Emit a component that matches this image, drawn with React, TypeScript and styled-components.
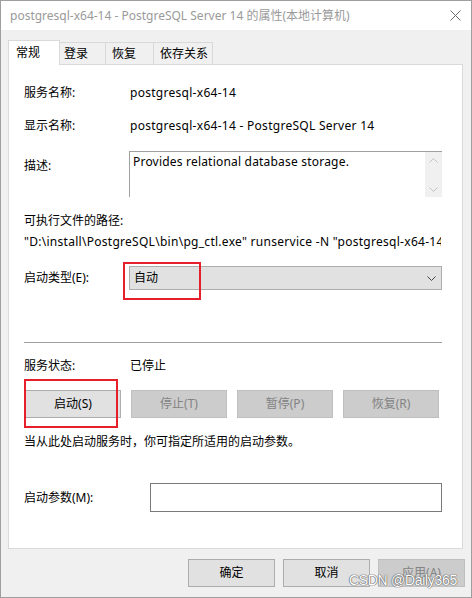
import React from 'react';
import styled, { createGlobalStyle } from 'styled-components';

const Global = createGlobalStyle`
  html, body { margin: 0; padding: 0; background: #fff; }
  body {
    font-family: "Noto Sans", "Noto Sans CJK SC", sans-serif;
    font-size: 12px;
    color: #000;
  }
  * { box-sizing: border-box; }
`;

const Window = styled.div`
  position: relative;
  width: 472px;
  height: 598px;
  border: 1px solid #9e9e9e;
  background: #f0f0f0;
  display: flex;
  flex-direction: column;
  overflow: hidden;
`;

const TitleBar = styled.div`
  height: 29px;
  background: #fff;
  display: flex;
  align-items: center;
  justify-content: space-between;
  padding-left: 9px;
  flex: none;
`;

const Title = styled.div`
  color: #9a9a9a;
  white-space: nowrap;
  line-height: 16px;
`;

const CloseBtn = styled.div`
  width: 30px;
  height: 29px;
  display: flex;
  align-items: center;
  justify-content: center;
  padding-right: 2px;
`;

const Body = styled.div`
  padding-top: 10px;
  display: flex;
  flex-direction: column;
  flex: 1;
`;

const TabBar = styled.div`
  display: flex;
  align-items: flex-end;
  height: 24px;
  padding-left: 7px;
  position: relative;
  z-index: 1;
`;

const Tab = styled.div<{ $active?: boolean; $w: number; $pl: number }>`
  width: ${p => p.$w}px;
  height: ${p => (p.$active ? 25 : 22)}px;
  margin-bottom: ${p => (p.$active ? -1 : 0)}px;
  margin-left: ${p => (p.$active ? 0 : -1)}px;
  padding-left: ${p => p.$pl}px;
  border: 1px solid #d9d9d9;
  border-bottom: none;
  background: ${p => (p.$active ? '#fff' : '#f0f0f0')};
  display: flex;
  align-items: center;
  white-space: nowrap;
  line-height: 16px;
  padding-bottom: ${p => (p.$active ? 1 : 0)}px;
  position: relative;
  z-index: ${p => (p.$active ? 2 : 1)};
`;

const Panel = styled.div`
  margin: 0 8px 0 7px;
  height: 485px;
  background: #fff;
  border: 1px solid #d9d9d9;
  padding: 0 20px 0 15px;
  display: flex;
  flex-direction: column;
  flex: none;
`;

const Row = styled.div<{ $h: number; $mt: number; $top?: boolean }>`
  display: flex;
  align-items: ${p => (p.$top ? 'flex-start' : 'center')};
  height: ${p => p.$h}px;
  margin-top: ${p => p.$mt}px;
  flex: none;
  white-space: nowrap;
  line-height: 16px;
`;

const Label = styled.div<{ $w?: number; $pt?: number }>`
  width: ${p => p.$w ?? 106}px;
  flex: none;
  padding-top: ${p => p.$pt ?? 0}px;
`;

const Value = styled.div<{ $latin?: boolean }>`
  white-space: nowrap;
  letter-spacing: ${p => (p.$latin ? '0.28px' : 'normal')};
`;

const PathText = styled.div`
  overflow: hidden;
  white-space: nowrap;
  width: 417px;
  letter-spacing: 0.28px;
`;

const TextArea = styled.div`
  margin-left: -1px;
  flex: 1;
  height: 46px;
  border-top: 1px solid #a0a0a0;
  border-left: 1px solid #a0a0a0;
  display: flex;
  background: #fff;
`;

const TextContent = styled.div`
  flex: 1;
  padding: 2px 0 0 3px;
  letter-spacing: 0.2px;
`;

const ScrollBar = styled.div`
  width: 17px;
  background: #f0f0f0;
  display: flex;
  flex-direction: column;
  justify-content: space-between;
  align-items: center;
  padding: 6px 0 5px;
`;

const Combo = styled.div`
  position: relative;
  margin-left: -1px;
  flex: 1;
  height: 24px;
  background: #e1e1e1;
  border: 1px solid #adadad;
  display: flex;
  align-items: center;
  justify-content: space-between;
  padding: 0 5px 0 4px;
`;

const Highlight = styled.div<{ $l: number; $t: number; $w: number; $h: number }>`
  position: absolute;
  left: ${p => p.$l}px;
  top: ${p => p.$t}px;
  width: ${p => p.$w}px;
  height: ${p => p.$h}px;
  border: 2px solid #e5202a;
  pointer-events: none;
`;

const Separator = styled.div`
  height: 1px;
  background: #a0a0a0;
  margin-top: 52px;
  flex: none;
`;

const ButtonGrid = styled.div`
  display: grid;
  grid-template-columns: repeat(4, 96px);
  column-gap: 10px;
  height: 28px;
  margin-top: 14px;
  padding-left: 1px;
  flex: none;
`;

const Cell = styled.div`
  position: relative;
`;

const Button = styled.div<{ $disabled?: boolean; $w?: number }>`
  width: ${p => (p.$w ? `${p.$w}px` : '100%')};
  height: 28px;
  background: ${p => (p.$disabled ? '#cccccc' : '#e1e1e1')};
  border: 1px solid ${p => (p.$disabled ? '#bfbfbf' : '#adadad')};
  color: ${p => (p.$disabled ? '#838383' : '#000')};
  display: flex;
  align-items: center;
  justify-content: center;
  white-space: nowrap;
  line-height: 16px;
`;

const Input = styled.div`
  flex: 1;
  height: 29px;
  border: 1px solid #7a7a7a;
  background: #fff;
`;

const Footer = styled.div`
  display: flex;
  justify-content: flex-end;
  gap: 8px;
  padding-right: 6px;
  margin-top: 10px;
`;

const Watermark = styled.div`
  position: absolute;
  right: 14px;
  bottom: 9px;
  font-family: "Liberation Sans", Arial, sans-serif;
  font-size: 14px;
  letter-spacing: -0.3px;
  color: #ffffff;
  text-shadow: 0 0 1px #555, 0 0 1px #555, 0 0 1px #777;
  white-space: nowrap;
  pointer-events: none;
`;

const Chevron = ({ up, color }: { up?: boolean; color: string }) => (
  <svg width="9" height="5" viewBox="0 0 9 5">
    <polyline
      points={up ? '0.5,4.5 4.5,0.5 8.5,4.5' : '0.5,0.5 4.5,4.5 8.5,0.5'}
      fill="none"
      stroke={color}
      strokeWidth="1"
    />
  </svg>
);

export default function App() {
  return (
    <>
      <Global />
      <Window>
        <TitleBar>
          <Title>postgresql-x64-14 - PostgreSQL Server 14 的属性(本地计算机)</Title>
          <CloseBtn>
            <svg width="11" height="11" viewBox="0 0 11 11">
              <path d="M0.5 0.5 L10.5 10.5 M10.5 0.5 L0.5 10.5" stroke="#6a6a6a" strokeWidth="1" />
            </svg>
          </CloseBtn>
        </TitleBar>
        <Body>
          <TabBar>
            <Tab $active $w={52} $pl={7}>常规</Tab>
            <Tab $w={47} $pl={4}>登录</Tab>
            <Tab $w={49} $pl={6}>恢复</Tab>
            <Tab $w={60} $pl={6}>依存关系</Tab>
          </TabBar>
          <Panel>
            <Row $h={20} $mt={18}>
              <Label>服务名称:</Label>
              <Value $latin>postgresql-x64-14</Value>
            </Row>
            <Row $h={20} $mt={13}>
              <Label>显示名称:</Label>
              <Value $latin>postgresql-x64-14 - PostgreSQL Server 14</Value>
            </Row>
            <Row $h={46} $mt={15} $top>
              <Label $pt={7}>描述:</Label>
              <TextArea>
                <TextContent>Provides relational database storage.</TextContent>
                <ScrollBar>
                  <Chevron up color="#c2c2c2" />
                  <Chevron color="#c2c2c2" />
                </ScrollBar>
              </TextArea>
            </Row>
            <Row $h={20} $mt={14}>
              <Label $w={200}>可执行文件的路径:</Label>
            </Row>
            <Row $h={20} $mt={1}>
              <PathText>"D:\install\PostgreSQL\bin\pg_ctl.exe" runservice -N "postgresql-x64-14"</PathText>
            </Row>
            <Row $h={24} $mt={14}>
              <Label>启动类型(E):</Label>
              <Combo>
                <span>自动</span>
                <Chevron color="#444" />
                <Highlight $l={-7} $t={-5} $w={78} $h={38} />
              </Combo>
            </Row>
            <Separator />
            <Row $h={20} $mt={13}>
              <Label>服务状态:</Label>
              <Value>已停止</Value>
            </Row>
            <ButtonGrid>
              <Cell>
                <Button>启动(S)</Button>
                <Highlight $l={-1} $t={-11} $w={94} $h={49} />
              </Cell>
              <Cell>
                <Button $disabled>停止(T)</Button>
              </Cell>
              <Cell>
                <Button $disabled>暂停(P)</Button>
              </Cell>
              <Cell>
                <Button $disabled>恢复(R)</Button>
              </Cell>
            </ButtonGrid>
            <Row $h={20} $mt={14}>
              <Value>当从此处启动服务时，你可指定所适用的启动参数。</Value>
            </Row>
            <Row $h={29} $mt={31}>
              <Label $w={126}>启动参数(M):</Label>
              <Input />
            </Row>
          </Panel>
          <Footer>
            <Button $w={87}>确定</Button>
            <Button $w={87}>取消</Button>
            <Button $w={87} $disabled>应用(A)</Button>
          </Footer>
        </Body>
        <Watermark>CSDN @Daily365</Watermark>
      </Window>
    </>
  );
}
